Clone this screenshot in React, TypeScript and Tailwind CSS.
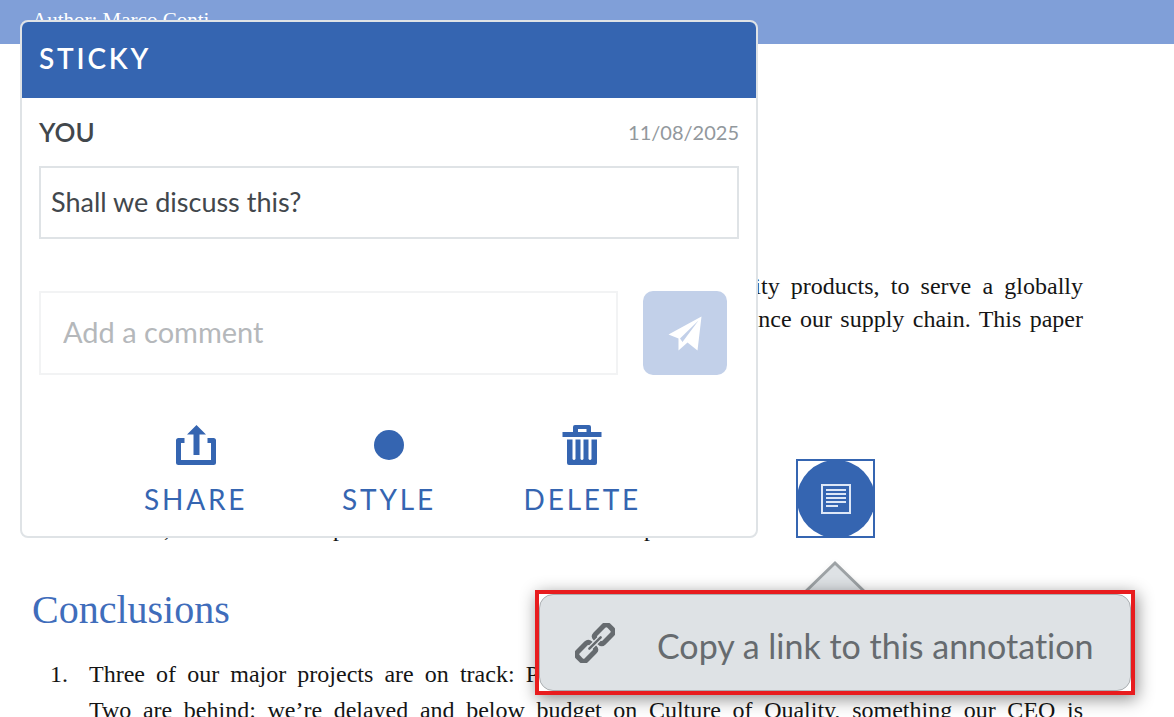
import React from 'react';

const ShareIcon: React.FC = () => (
  <svg viewBox="0 0 40 40" className="w-10 h-10" fill="none" aria-hidden="true">
    <path d="M8.500 15.500H2.500V37.500H37.500V15.500H31.500" stroke="currentColor" strokeWidth="5" strokeLinejoin="round" />
    <path d="M20.500 0L30 9.500H23.500V30H17.500V9.500H11Z" fill="currentColor" />
  </svg>
);

const TrashIcon: React.FC = () => (
  <svg viewBox="0 0 40 40" className="w-10 h-10" fill="currentColor" fillRule="evenodd" aria-hidden="true">
    <path d="M13 0H27Q29 0 29 2V7H39.500V12H0.500V7H11V2Q11 0 13 0ZM16 4V7H24.500V4Z" />
    <path d="M5 14.500H35V38Q35 40 33 40H7Q5 40 5 38ZM10.500 14.500V34Q12 36 13.500 34V14.500ZM18.500 14.500V34Q20 36 21.500 34V14.500ZM26.500 14.500V34Q28 36 29.500 34V14.500Z" />
  </svg>
);

const SendIcon: React.FC = () => (
  <svg viewBox="0 0 34 35" className="w-[34px] h-[35px]" fill="currentColor" fillRule="evenodd" aria-hidden="true">
    <path d="M33.500 0.500L0.500 18.500L10.500 22.500V34.500L19.500 26.500L29.500 34.500ZM30.500 4.500L12 22.500L14.500 26Z" />
  </svg>
);

const LinkIcon: React.FC = () => (
  <svg viewBox="0 0 40 40" className="w-10 h-10" fill="none" stroke="currentColor" aria-hidden="true">
    <g transform="rotate(-45 20 20)">
      <path d="M16.500 18V17Q16.500 14 13.500 14H2Q-2 14 -2 18V22Q-2 26 2 26H13.500Q16.500 26 16.500 23V22" strokeWidth="5" />
      <path d="M23.500 18V17Q23.500 14 26.500 14H38Q42 14 42 18V22Q42 26 38 26H26.500Q23.500 26 23.500 23V22" strokeWidth="5" />
      <path d="M10 20H30" stroke="#dee2e5" strokeWidth="5" />
      <path d="M12 20H28" strokeWidth="2.500" strokeLinecap="round" />
    </g>
  </svg>
);

const NoteIcon: React.FC = () => (
  <svg viewBox="0 0 30 30" className="w-[30px] h-[30px]" fill="none" stroke="#dde7f7" strokeWidth="2" aria-hidden="true">
    <path d="M1 1H29V29H1Z" />
    <path d="M5 6H25M5 10H25M5 14H25M5 18H25M5 22H17" />
  </svg>
);

const actions = [
  { label: 'SHARE', icon: <ShareIcon /> },
  { label: 'STYLE', icon: <span className="w-[30px] h-[30px] rounded-full bg-[#3565b1]" /> },
  { label: 'DELETE', icon: <TrashIcon /> },
];

const DocumentPage: React.FC = () => (
  <div className="font-['Liberation_Serif',serif] text-2xl text-[#151515]">
    <header className="h-11 px-8 bg-[#809fd8] text-white text-[21px] leading-10">Author: Marco Conti</header>

    <main className="pl-8 pr-[91px]">
      <p className="mt-[226px] ml-auto w-[370px] leading-[33px] text-justify [text-align-last:justify]">
        quality products, to serve a globally
        <br />
        enhance our supply chain. This paper
      </p>

      <p className="mt-[176px] pl-[132px] leading-[33px] flex">
        <span className="w-[169px]">,</span>
        <span className="w-[311px]">p</span>
        <span>p</span>
      </p>

      <h2 className="mt-[41px] text-[40px] leading-[48px] text-[#3f6dbb]">Conclusions</h2>

      <ol className="mt-[22px] leading-9">
        <li className="flex">
          <span className="w-[57px] pl-[18px] shrink-0">1.</span>
          <div className="flex-1 text-justify [text-align-last:justify]">
            <p className="w-[450px]">Three of our major projects are on track: P</p>
            <p>Two are behind: we’re delayed and below budget on Culture of Quality, something our CEO is</p>
          </div>
        </li>
      </ol>
    </main>
  </div>
);

const StickyPanel: React.FC = () => (
  <section className="absolute left-5 top-5 w-[738px] bg-white border-2 border-[#dfe3e6] rounded-lg overflow-hidden">
    <h2 className="h-[76px] px-[17px] bg-[#3565b1] text-white text-[28px] leading-[72px] font-semibold tracking-widest">
      STICKY
    </h2>

    <div className="px-[17px] text-[#42474c]">
      <div className="h-[68px] flex items-center justify-between">
        <span className="text-[26px] font-semibold">YOU</span>
        <time className="text-xl text-[#92989d]">11/08/2025</time>
      </div>

      <p className="h-[73px] px-[10px] border-2 border-[#dfe3e6] text-[27px] leading-[68px]">Shall we discuss this?</p>

      <form className="mt-[52px] pr-3 flex gap-[25px]" onSubmit={(e) => e.preventDefault()}>
        <input
          type="text"
          aria-label="Add a comment"
          placeholder="Add a comment"
          className="flex-1 min-w-0 h-[84px] px-[22px] pb-1 border-2 border-[#f2f3f4] text-[29px] placeholder:text-[#b5b8bb] outline-none"
        />
        <button type="submit" aria-label="Send" className="w-[84px] h-[84px] rounded-[10px] bg-[#c2d0e9] text-white flex items-center justify-center">
          <SendIcon />
        </button>
      </form>

      <div className="mt-[50px] mb-[19px] px-[60px] grid grid-cols-3">
        {actions.map((action) => (
          <button key={action.label} type="button" className="flex flex-col items-center text-[#3565b1]">
            <span className="h-10 flex items-center">{action.icon}</span>
            <span className="mt-4 text-[28px] leading-9 tracking-widest">{action.label}</span>
          </button>
        ))}
      </div>
    </div>
  </section>
);

const App: React.FC = () => {
  return (
    <div className="relative h-screen overflow-hidden bg-white font-['Lato',sans-serif]">
      <DocumentPage />
      <StickyPanel />

      {/* Annotation marker */}
      <button
        type="button"
        aria-label="Sticky note"
        className="absolute left-[796px] top-[459px] w-[79px] h-[79px] border-2 border-[#3565b1] bg-white overflow-hidden flex items-center justify-center"
      >
        <span className="w-[78px] h-[78px] shrink-0 rounded-full bg-[#3565b1] flex items-center justify-center">
          <NoteIcon />
        </span>
      </button>

      {/* Context menu */}
      <div className="absolute left-[535px] top-[590px] w-[600px]">
        <svg viewBox="0 0 64 32" className="absolute left-[268px] -top-[30px] w-16 h-8 drop-shadow-md" aria-hidden="true">
          <path d="M1 33L32 3L63 33" fill="#dee2e5" stroke="#9da2a5" strokeWidth="3" />
        </svg>
        <div className="relative border-4 border-[#e81c1e] bg-white shadow-[2px_4px_16px_rgba(0,0,0,0.45)]">
          <button
            type="button"
            className="w-full h-[97px] pl-[35px] flex items-center gap-[42px] border border-[#a9adb0] rounded-[14px] bg-[#dee2e5] text-[#666b6f] text-[34px]"
          >
            <LinkIcon />
            <span className="pt-[6px] leading-10 [font-variant-ligatures:none]">Copy a link to this annotation</span>
          </button>
        </div>
      </div>
    </div>
  );
};

export default App;
